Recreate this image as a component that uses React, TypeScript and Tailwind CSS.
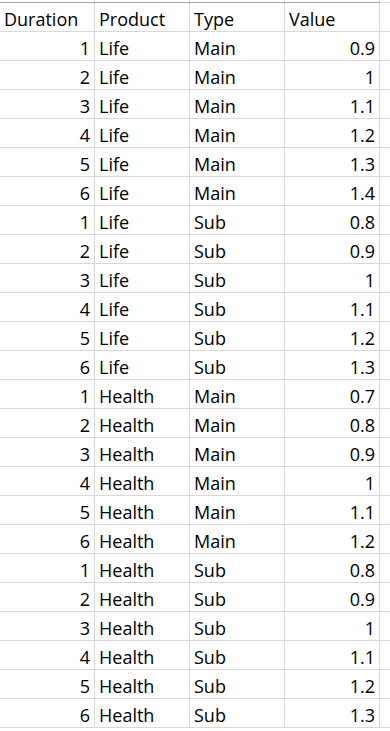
const rows: [number, string, string, string][] = [
  [1, "Life", "Main", "0.9"],
  [2, "Life", "Main", "1"],
  [3, "Life", "Main", "1.1"],
  [4, "Life", "Main", "1.2"],
  [5, "Life", "Main", "1.3"],
  [6, "Life", "Main", "1.4"],
  [1, "Life", "Sub", "0.8"],
  [2, "Life", "Sub", "0.9"],
  [3, "Life", "Sub", "1"],
  [4, "Life", "Sub", "1.1"],
  [5, "Life", "Sub", "1.2"],
  [6, "Life", "Sub", "1.3"],
  [1, "Health", "Main", "0.7"],
  [2, "Health", "Main", "0.8"],
  [3, "Health", "Main", "0.9"],
  [4, "Health", "Main", "1"],
  [5, "Health", "Main", "1.1"],
  [6, "Health", "Main", "1.2"],
  [1, "Health", "Sub", "0.8"],
  [2, "Health", "Sub", "0.9"],
  [3, "Health", "Sub", "1"],
  [4, "Health", "Sub", "1.1"],
  [5, "Health", "Sub", "1.2"],
  [6, "Health", "Sub", "1.3"],
];

function Cell({ children, right }: { children?: React.ReactNode; right?: boolean }) {
  return (
    <div
      className={`flex h-full w-[95px] shrink-0 items-end border-r border-[#d9d9d9] pb-0 leading-[24px] ${
        right ? "justify-end pr-[4px]" : "pl-[4px]"
      }`}
    >
      {children}
    </div>
  );
}

function Row({ cells }: { cells: [React.ReactNode, React.ReactNode, React.ReactNode, React.ReactNode] }) {
  return (
    <div className="flex h-[29px] border-b border-[#d9d9d9]">
      <Cell right={typeof cells[0] === "number"}>{cells[0]}</Cell>
      <Cell>{cells[1]}</Cell>
      <Cell>{cells[2]}</Cell>
      <Cell right={cells[3] !== "Value"}>{cells[3]}</Cell>
      <div className="flex-1" />
    </div>
  );
}

export default function App() {
  return (
    <div
      className="h-[731px] w-[390px] overflow-hidden bg-white text-[18px] text-black"
      style={{ fontFamily: '"Open Sans", sans-serif' }}
    >
      <div className="flex h-[3px]">
        <div className="h-full w-[380px] border-b border-[#a6a6a6]">
          <div className="flex h-full">
            <div className="h-full w-[95px] border-r border-[#d9d9d9]" />
            <div className="h-full w-[95px] border-r border-[#d9d9d9]" />
            <div className="h-full w-[95px] border-r border-[#d9d9d9]" />
            <div className="h-full w-[95px] border-r border-[#d9d9d9]" />
          </div>
        </div>
        <div className="flex-1 border-b border-[#d9d9d9]" />
      </div>
      <Row cells={["Duration", "Product", "Type", "Value"]} />
      {rows.map((r, i) => (
        <Row key={i} cells={[r[0], r[1], r[2], r[3]]} />
      ))}
    </div>
  );
}
